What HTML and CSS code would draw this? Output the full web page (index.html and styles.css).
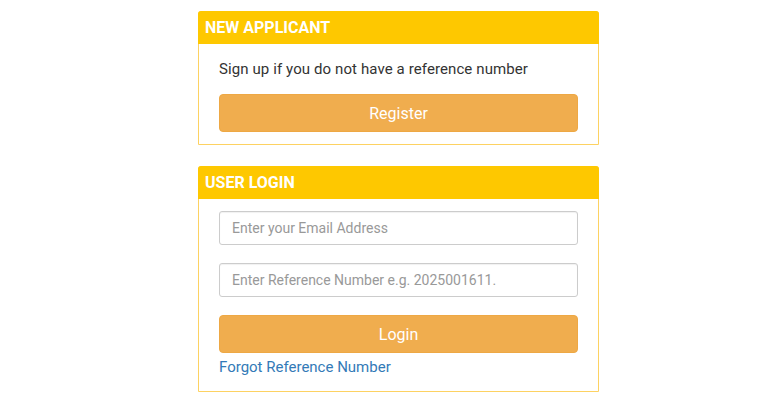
FILE: index.html
```html
<!DOCTYPE html>
<html>
<head>
<meta charset="utf-8">
<link rel="stylesheet" href="styles.css">
</head>
<body>
<div class="wrap">
  <section class="card">
    <div class="card-head">NEW APPLICANT</div>
    <div class="card-body">
      <p class="note">Sign up if you do not have a reference number</p>
      <button class="btn">Register</button>
    </div>
  </section>
  <section class="card">
    <div class="card-head">USER LOGIN</div>
    <div class="card-body login">
      <input class="field" type="text" placeholder="Enter your Email Address">
      <input class="field" type="text" placeholder="Enter Reference Number e.g. 2025001611.">
      <button class="btn">Login</button>
      <a class="link" href="#">Forgot Reference Number</a>
    </div>
  </section>
</div>
</body>
</html>
```
FILE: styles.css
```css
html, body {
  margin: 0;
  padding: 0;
  background: #fff;
  font-family: Roboto, "Liberation Sans", sans-serif;
}
.wrap {
  width: 401px;
  margin: 11px 0 0 198px;
  display: flex;
  flex-direction: column;
  gap: 21px;
}
.card {
  border: 1px solid #fdd262;
  border-radius: 3px 3px 0 0;
  background: #fff;
}
.card-head {
  background: #fec800;
  color: #fff;
  font-weight: 700;
  font-size: 16px;
  height: 33px;
  line-height: 33px;
  padding: 0 7px;
  margin: -1px -1px 0 -1px;
  border-radius: 3px 3px 0 0;
}
.card-body {
  padding: 15px 20px 12px 20px;
  display: flex;
  flex-direction: column;
}
.note {
  margin: 0 0 15px 0;
  font-size: 15px;
  line-height: 20px;
  color: #333;
  letter-spacing: 0.1px;
}
.btn {
  height: 38px;
  border: 1px solid #eea844;
  border-radius: 4px;
  background: #f0ad4e;
  color: #fff;
  font-family: Roboto, "Liberation Sans", sans-serif;
  font-size: 16px;
  padding: 0;
  width: 100%;
}
.login {
  padding: 12px 20px 15px 20px;
}
.field {
  height: 34px;
  box-sizing: border-box;
  border: 1px solid #ccc;
  border-radius: 3px;
  padding: 0 12px;
  font-family: Roboto, "Liberation Sans", sans-serif;
  font-size: 14px;
  color: #555;
  margin-bottom: 18px;
  box-shadow: inset 0 1px 1px rgba(0,0,0,0.06);
}
.field::placeholder {
  color: #999;
}
.link {
  margin-top: 6px;
  font-size: 15px;
  line-height: 17px;
  color: #337ab7;
  text-decoration: none;
}
```
